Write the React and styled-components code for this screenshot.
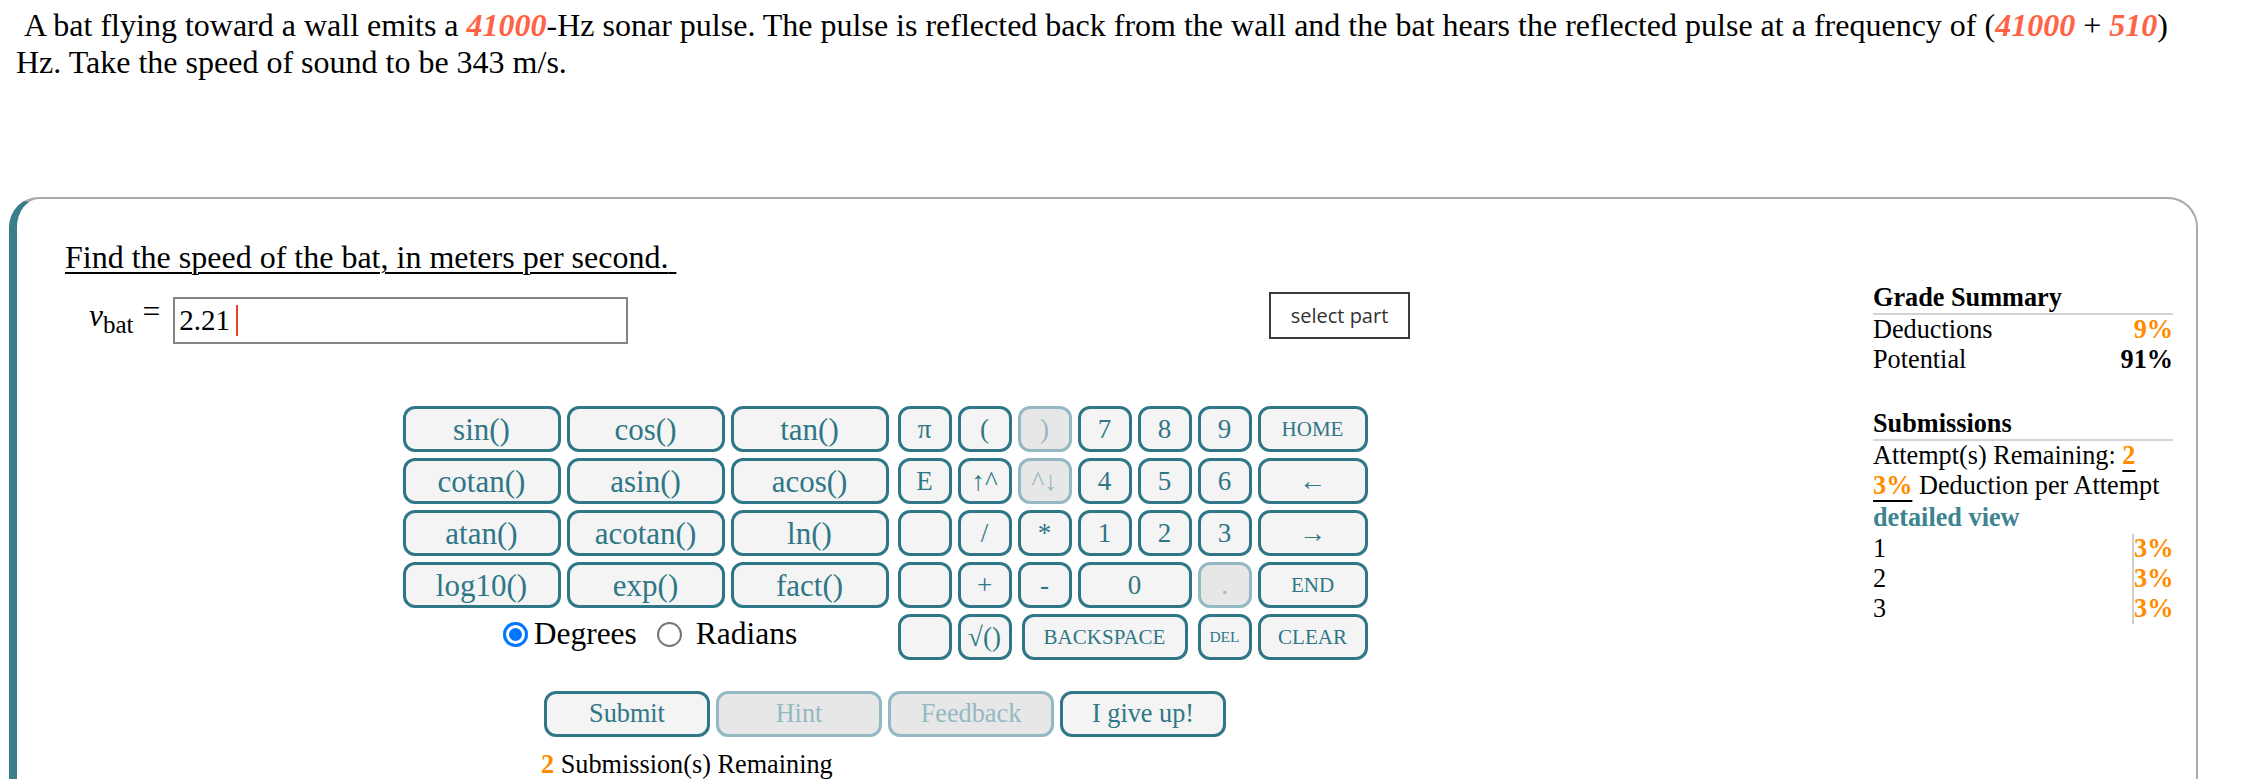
import React from 'react';
import styled, { createGlobalStyle, css } from 'styled-components';

const serif = `"Liberation Serif", "Times New Roman", serif`;
const teal = '#2f7686';
const tealSoft = '#94b9c3';
const orange = '#ff8c00';

const GlobalStyle = createGlobalStyle`
    html, body {
        margin: 0;
        padding: 0;
        background: #fff;
    }
    body {
        font-family: ${serif};
        color: #000;
        overflow: hidden;
    }
`;

const Page = styled.main`
    width: 2256px;
    height: 779px;
    overflow: hidden;
`;

const Problem = styled.p`
    margin: 0;
    padding: 7px 0 0 16px;
    font-size: 32px;
    line-height: 37px;
    text-indent: 8px;
    white-space: nowrap;
`;

const Given = styled.b`
    color: tomato;
    font-style: italic;
`;

const Card = styled.section`
    box-sizing: border-box;
    display: flex;
    width: 2189px;
    height: 600px;
    margin: 116px 0 0 9px;
    border: 2px solid #a9a9a9;
    border-left: 8px solid #3b7e8b;
    border-bottom: none;
    border-radius: 30px 30px 0 0;
`;

const Main = styled.div`
    box-sizing: border-box;
    width: 1393px;
    padding: 40px 0 0 48px;
`;

const Question = styled.p`
    margin: 0;
    font-size: 32px;
    line-height: 37px;
    text-decoration: underline;
    text-decoration-thickness: 2px;
    text-underline-offset: 4px;
`;

const AnswerRow = styled.div`
    display: flex;
    align-items: flex-start;
    margin-top: 16px;
`;

const Label = styled.div`
    margin-top: 6px;
    padding-left: 24px;
    font-size: 31.5px;
    line-height: 36px;
    white-space: nowrap;
`;

const Var = styled.i``;

const Sub = styled.span`
    font-size: 25px;
    line-height: 0;
    vertical-align: -7px;
`;

const Eq = styled.span`
    margin-left: 9px;
    line-height: 0;
    vertical-align: 4px;
`;

const Answer = styled.div`
    box-sizing: border-box;
    width: 455px;
    height: 47px;
    margin: 5px 0 0 13px;
    padding-left: 4px;
    border: 2px solid #858585;
    font-size: 29px;
    line-height: 43px;
`;

const Caret = styled.span`
    display: inline-block;
    width: 2px;
    height: 31px;
    margin-left: 6px;
    vertical-align: -6px;
    background: #e8452c;
`;

const SelectPart = styled.button`
    box-sizing: border-box;
    width: 141px;
    height: 47px;
    margin-left: auto;
    padding: 0;
    border: 2px solid #3a3a3a;
    background: #fff;
    color: #333;
    font-family: "Open Sans", "Noto Sans", sans-serif;
    font-size: 20px;
`;

const Pad = styled.div`
    width: 966px;
    margin: 62px 0 0 337px;
    display: flex;
    flex-direction: column;
    align-items: center;
`;

const KeyArea = styled.div`
    display: flex;
    align-items: flex-start;
    gap: 9px;
`;

const FuncCol = styled.div`
    display: flex;
    flex-direction: column;
`;

const FuncGrid = styled.div`
    display: grid;
    grid-template-columns: repeat(3, 158px);
    grid-auto-rows: 46px;
    gap: 6px;
`;

const KeyGrid = styled.div`
    display: grid;
    grid-template-columns: repeat(6, 54px) 110px;
    grid-auto-rows: 46px;
    gap: 6px;
`;

const keySizes = {
    fn: '31px',
    num: '27px',
    arrow: '27px',
    word: '21px',
    tiny: '15.5px',
};

const Key = styled.button`
    box-sizing: border-box;
    height: 46px;
    margin: 0 ${p => p.$inset || 0}px;
    padding: 0;
    border: 3px solid ${p => (p.$off ? tealSoft : teal)};
    border-radius: 12px;
    background: ${p => (p.$off ? '#e7e7e7' : '#f4f4f4')};
    color: ${p => (p.$off ? tealSoft : teal)};
    font-family: ${serif};
    font-size: ${p => keySizes[p.$size || 'num']};
    line-height: 1;
    white-space: nowrap;
    grid-column: ${p => (p.$span ? `span ${p.$span}` : 'auto')};
`;

const AngleRow = styled.div`
    display: flex;
    align-items: center;
    justify-content: center;
    margin-top: 8px;
    padding-left: 9px;
    font-size: 31.5px;
    line-height: 36px;
`;

const Radio = styled.span`
    box-sizing: border-box;
    display: inline-block;
    width: 25px;
    height: 25px;
    margin-left: ${p => p.$gap || 0}px;
    border-radius: 50%;
    ${p => (p.$on
        ? css`
            background: #0075ff;
            box-shadow: inset 0 0 0 3px #0075ff, inset 0 0 0 6px #fff;
        `
        : css`
            border: 2px solid #767676;
            background: #fff;
        `)}
`;

const RadioText = styled.span`
    margin-left: ${p => p.$gap}px;
`;

const SubmitBlock = styled.div`
    display: flex;
    flex-direction: column;
    align-items: flex-start;
    margin-top: 31px;
`;

const Actions = styled.div`
    display: flex;
    gap: 6px;
`;

const Action = styled.button`
    box-sizing: border-box;
    width: 166px;
    height: 46px;
    padding: 0;
    border: 3px solid ${p => (p.$off ? tealSoft : teal)};
    border-radius: 12px;
    background: ${p => (p.$off ? '#e7e7e7' : '#f4f4f4')};
    color: ${p => (p.$off ? tealSoft : teal)};
    font-family: ${serif};
    font-size: 26.25px;
`;

const Remaining = styled.div`
    margin: 13px 0 0 -3px;
    font-size: 26.25px;
    line-height: 30px;
`;

const Orange = styled.b`
    color: ${orange};
`;

const Side = styled.aside`
    width: 300px;
    margin: 0 23px 0 auto;
    padding-top: 84px;
    font-size: 26.25px;
    line-height: 30px;
`;

const Heading = styled.div`
    margin-top: ${p => p.$gap || 0}px;
    font-weight: bold;
    border-bottom: 2px solid #d3d3d3;
`;

const Row = styled.div`
    display: flex;
    justify-content: space-between;
`;

const Marked = styled.span`
    text-decoration: underline;
    text-decoration-color: #000;
    text-decoration-thickness: 2px;
    text-underline-offset: 6px;
`;

const DetailLink = styled.div`
    margin-top: 2px;
    color: #3d8490;
    font-weight: bold;
`;

const Attempts = styled.div`
    margin-top: 1px;
`;

const AttemptPct = styled.b`
    box-sizing: border-box;
    width: 41px;
    border-left: 2px solid #cfcfcf;
    color: ${orange};
    text-align: right;
`;

const functions = [
    'sin()', 'cos()', 'tan()',
    'cotan()', 'asin()', 'acos()',
    'atan()', 'acotan()', 'ln()',
    'log10()', 'exp()', 'fact()',
];

const keys = [
    { t: 'π' }, { t: '(' }, { t: ')', off: true }, { t: '7' }, { t: '8' }, { t: '9' }, { t: 'HOME', size: 'word' },
    { t: 'E' }, { t: '↑^' }, { t: '^↓', off: true }, { t: '4' }, { t: '5' }, { t: '6' }, { t: '←', size: 'arrow' },
    { t: '' }, { t: '/' }, { t: '*' }, { t: '1' }, { t: '2' }, { t: '3' }, { t: '→', size: 'arrow' },
    { t: '' }, { t: '+' }, { t: '-' }, { t: '0', span: 2 }, { t: '.', off: true }, { t: 'END', size: 'word' },
    { t: '' }, { t: '√()' }, { t: 'BACKSPACE', size: 'word', span: 3, inset: 4 }, { t: 'DEL', size: 'tiny' }, { t: 'CLEAR', size: 'word' },
];

export default function App() {
    return (
        <Page>
            <GlobalStyle />
            <Problem>
                A bat flying toward a wall emits a <Given>41000</Given>-Hz sonar pulse. The pulse is reflected back from the wall and the bat hears the reflected pulse at a frequency of (<Given>41000</Given> + <Given>510</Given>)
                <br />
                Hz. Take the speed of sound to be 343 m/s.
            </Problem>

            <Card>
                <Main>
                    <Question>Find the speed of the bat, in meters per second.{'\u00a0'}</Question>
                    <AnswerRow>
                        <Label>
                            <Var>v</Var><Sub>bat</Sub><Eq>=</Eq>
                        </Label>
                        <Answer>2.21<Caret /></Answer>
                        <SelectPart>select part</SelectPart>
                    </AnswerRow>

                    <Pad>
                        <KeyArea>
                            <FuncCol>
                                <FuncGrid>
                                    {functions.map(f => (
                                        <Key key={f} $size="fn">{f}</Key>
                                    ))}
                                </FuncGrid>
                                <AngleRow>
                                    <Radio $on />
                                    <RadioText $gap={6}>Degrees</RadioText>
                                    <Radio $gap={20} />
                                    <RadioText $gap={14}>Radians</RadioText>
                                </AngleRow>
                            </FuncCol>
                            <KeyGrid>
                                {keys.map((k, i) => (
                                    <Key
                                        key={i}
                                        $size={k.size}
                                        $span={k.span}
                                        $off={k.off}
                                        $inset={k.inset}
                                    >
                                        {k.t}
                                    </Key>
                                ))}
                            </KeyGrid>
                        </KeyArea>

                        <SubmitBlock>
                            <Actions>
                                <Action>Submit</Action>
                                <Action $off>Hint</Action>
                                <Action $off>Feedback</Action>
                                <Action>I give up!</Action>
                            </Actions>
                            <Remaining><Orange>2</Orange> Submission(s) Remaining</Remaining>
                        </SubmitBlock>
                    </Pad>
                </Main>

                <Side>
                    <Heading>Grade Summary</Heading>
                    <Row><span>Deductions</span><Orange>9%</Orange></Row>
                    <Row><span>Potential</span><b>91%</b></Row>

                    <Heading $gap={34}>Submissions</Heading>
                    <div>Attempt(s) Remaining: <Marked><Orange>2</Orange></Marked></div>
                    <div><Marked><Orange>3%</Orange></Marked> Deduction per Attempt</div>
                    <DetailLink>detailed view</DetailLink>
                    <Attempts>
                        {[1, 2, 3].map(n => (
                            <Row key={n}><span>{n}</span><AttemptPct>3%</AttemptPct></Row>
                        ))}
                    </Attempts>
                </Side>
            </Card>
        </Page>
    );
}
